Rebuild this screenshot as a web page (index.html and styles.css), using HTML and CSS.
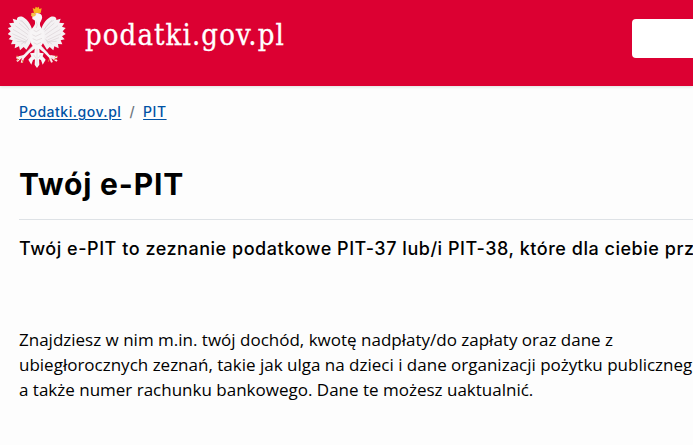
FILE: index.html
```
<!DOCTYPE html>
<html lang="pl">
<head>
  <meta charset="UTF-8">
  <meta name="viewport" content="width=device-width, initial-scale=1.0">
  <title>Twój e-PIT</title>
  <link rel="stylesheet" href="styles.css">
</head>
<body>
  <header class="header">
    <a class="brand" href="#">
      <svg class="eagle" viewBox="24 18 174 192" aria-hidden="true">
        <!-- wings -->
        <g fill="#f4f1f3">
          <path d="M97 90 C93 76 84 59 69 51 C57 47 49 53 51 60 L38 56 L42 68 L27 70 L34 80 L23 84 L32 94 L23 102 L34 109 L26 118 L38 121 L33 133 L46 132 L44 145 L57 139 L60 151 L71 141 L79 149 L92 128 Z"/>
          <path d="M123 90 C127 76 136 59 151 51 C163 47 171 53 169 60 L182 56 L178 68 L193 70 L186 80 L197 84 L188 94 L197 102 L186 109 L194 118 L182 121 L187 133 L174 132 L176 145 L163 139 L160 151 L149 141 L141 149 L128 128 Z"/>
        </g>
        <!-- body, legs and tail -->
        <path fill="#f7f5f6" d="M97 50 C100 37 118 35 125 46 C129 54 124 61 120 69 C118 77 124 84 130 92 C137 106 133 127 124 137 L148 164 L158 171 L151 177 L134 160 L118 146 L119 158 L131 160 L128 169 L137 179 L128 194 L123 180 L117 178 L118 194 L111 204 L104 194 L105 178 L99 180 L94 194 L85 179 L94 169 L90 160 L103 158 L104 146 L87 160 L70 178 L61 172 L73 163 L98 138 C88 125 86 105 92 91 C97 82 109 77 104 61 L97 57 Z"/>
        <!-- feather shading -->
        <g fill="none" stroke="#d3c8cd" stroke-width="1.5">
          <path d="M57 69 L86 94 M46 77 L84 104 M39 88 L81 113 M37 101 L77 120 M43 113 L74 125 M50 124 L78 126 M64 60 L88 89 M63 133 L80 121 M74 132 L84 116 M59 61 Q77 69 88 90"/>
          <path d="M163 69 L134 94 M174 77 L136 104 M181 88 L139 113 M183 101 L143 120 M177 113 L146 125 M170 124 L142 126 M156 60 L132 89 M157 133 L140 121 M146 132 L136 116 M161 61 Q143 69 132 90"/>
          <path d="M101 91 L109 95 L119 89 M97 104 L107 109 L124 101 M98 116 L110 121 L126 115 M101 128 L111 133 L123 127 M108 64 Q115 75 109 84 M111 146 V196 M100 164 L108 174 M122 164 L115 174 M96 139 L77 159 M127 141 L144 160"/>
        </g>
        <!-- feet -->
        <path fill="none" stroke="#f7e9e9" stroke-width="6" d="M69 169 L49 173 M64 171 L51 184 M69 174 L65 188 M151 168 L172 172 M156 172 L171 183 M150 173 L156 187"/>
        <path fill="none" stroke="#df8e43" stroke-width="3" d="M56 170 L50 168 M57 178 L51 180 M68 180 V188 M165 170 L172 168 M162 178 L170 178 M149 176 L145 185"/>
        <path fill="#f7b61c" d="M98 24 L105 27 L107 20 L112 23 L116 20 L118 27 L125 25 L122 39 L102 39 Z"/>
        <path fill="#f5c14a" d="M94 44 Q91 37 103 39 L109 44 Q103 51 97 50 L93 47 Z"/>
      </svg>
      <span class="brand-name">podatki.gov.pl</span>
    </a>
    <div class="search-box"></div>
  </header>

  <main class="content">
    <nav class="breadcrumb">
      <a href="#">Podatki.gov.pl</a>
      <span class="separator">/</span>
      <a href="#">PIT</a>
    </nav>
    <h1>Twój e-PIT</h1>
    <p class="lead">Twój e-PIT to zeznanie podatkowe PIT-37 lub/i PIT-38, które dla ciebie prz</p>
    <p class="text">Znajdziesz w nim m.in. twój dochód, kwotę nadpłaty/do zapłaty oraz dane z<br>
      ubiegłorocznych zeznań, takie jak ulga na dzieci i dane organizacji pożytku publiczneg<br>
      a także numer rachunku bankowego. Dane te możesz uaktualnić.</p>
  </main>
</body>
</html>
```
FILE: styles.css
```
* {
  box-sizing: border-box;
}
body {
  margin: 0;
  overflow: hidden;
  background-color: #fdfdfd;
  color: #000;
  font-family: "Open Sans", sans-serif;
}
.header {
  display: flex;
  align-items: flex-start;
  justify-content: space-between;
  height: 86px;
  background-color: #dc0032;
  box-shadow: 0 1px 3px rgba(0, 0, 0, 0.12);
}
.brand {
  display: flex;
  padding: 6px 0 0 8px;
  color: #fff;
  text-decoration: none;
}
.eagle {
  width: 58px;
  height: 64px;
}
.brand-name {
  margin: 9px 0 0 19px;
  font-family: "DejaVu Serif Condensed", "DejaVu Serif", serif;
  font-stretch: condensed;
  font-size: 29px;
  letter-spacing: 1.1px;
  line-height: 40px;
  -webkit-text-stroke: 0.3px #fff;
}
.search-box {
  width: 61px;
  height: 39px;
  margin-top: 19px;
  background-color: #fff;
  border-radius: 4px 0 0 4px;
}
.content {
  padding: 16px 0 0 19px;
  white-space: nowrap;
}
.breadcrumb {
  display: flex;
  height: 20px;
  font-family: Inter, sans-serif;
  font-size: 14px;
  font-weight: 500;
  letter-spacing: 0.52px;
  line-height: 20px;
}
.breadcrumb a {
  color: #0052a5;
  text-underline-offset: 2px;
}
.separator {
  margin: 0 8px;
  color: #6c757d;
}
h1 {
  height: 98px;
  margin: 0;
  padding-top: 42px;
  border-bottom: 1px solid #dee2e6;
  font-family: Inter, sans-serif;
  font-size: 30px;
  font-weight: 700;
  letter-spacing: 0.85px;
  line-height: 40px;
}
.lead {
  margin: 16px 0 0;
  font-family: Inter, sans-serif;
  font-size: 18px;
  font-weight: 500;
  letter-spacing: 0.53px;
  line-height: 26px;
}
.text {
  margin: 65px 0 0;
  font-size: 17px;
  line-height: 25px;
}
```
